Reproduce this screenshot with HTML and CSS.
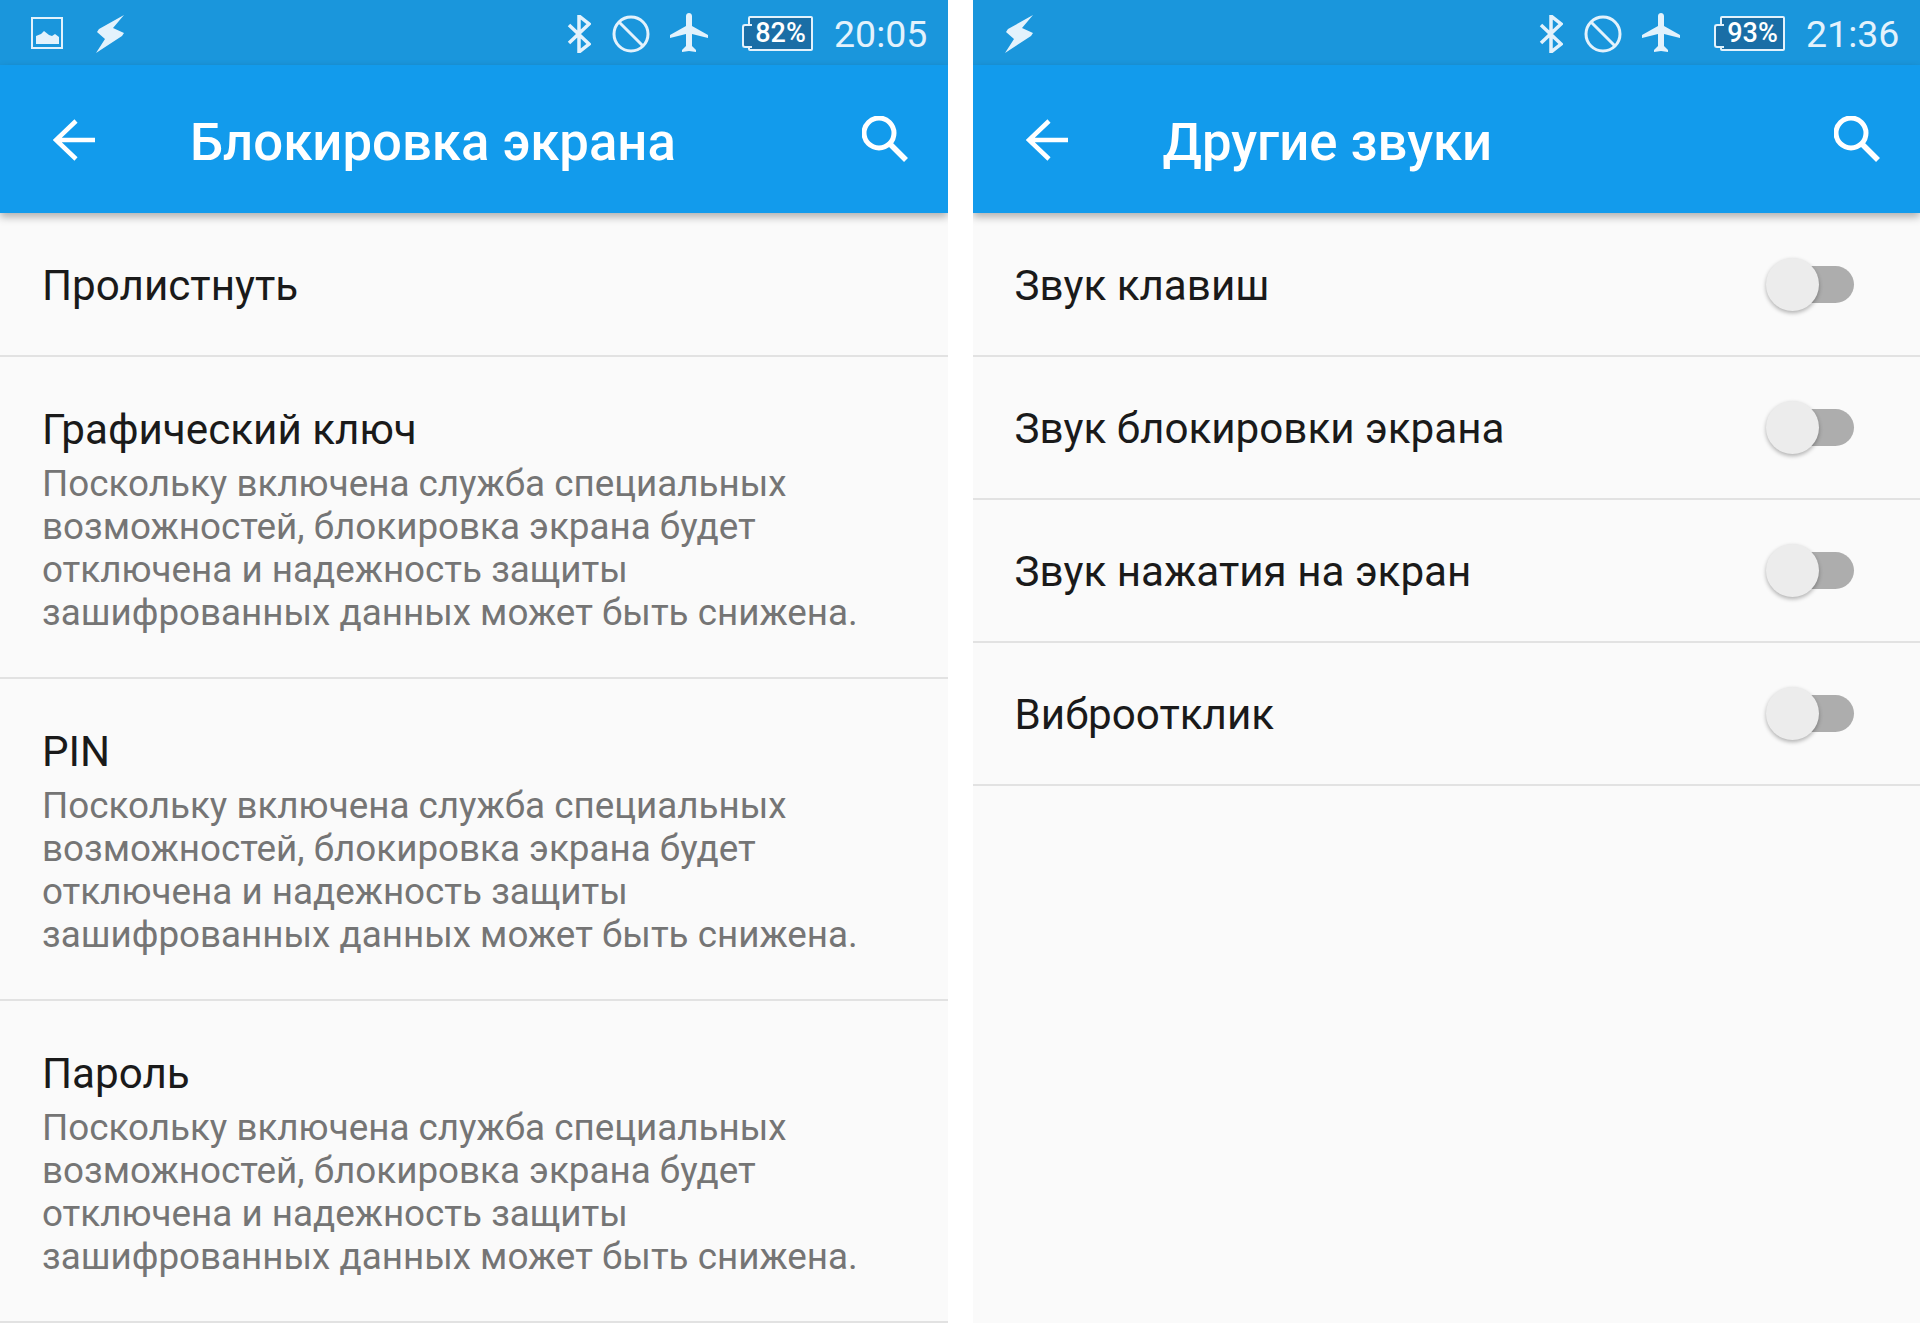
FILE: index.html

```html
<!DOCTYPE html>
<html lang="ru">
<head>
  <meta charset="UTF-8">
  <meta name="viewport" content="width=device-width, initial-scale=1.0">
  <title>Настройки</title>
  <link rel="stylesheet" href="styles.css">
</head>
<body>
<div class="screens">

  <!-- left phone -->
  <div class="phone">
    <div class="status-bar">
      <svg class="ic-image" viewBox="0 0 32 32">
        <rect x="1" y="1" width="30" height="30" fill="none" stroke="currentColor" stroke-width="2"/>
        <path d="M5 27V19l5-2 3-3 5 4 3 1 3-2 4 3v7z" fill="currentColor"/>
      </svg>
      <svg class="ic-bolt" viewBox="0 0 28 39">
        <path d="M28 0L17 13l11 5-2 3L0 38 9 24 1 17 3 14z" fill="currentColor"/>
      </svg>
      <div class="status-right">
        <svg class="ic-bt" viewBox="0 0 24 38">
          <path d="M2 10l20 19-10 8V1l10 8L2 28" fill="none" stroke="currentColor" stroke-width="3.500"/>
        </svg>
        <svg class="ic-block" viewBox="0 0 38 38">
          <circle cx="19" cy="19" r="17" fill="none" stroke="currentColor" stroke-width="3"/>
          <path d="M7 7l24 24" stroke="currentColor" stroke-width="3"/>
        </svg>
        <svg class="ic-plane" viewBox="0 0 38 40">
          <path d="M38 25v-3L22 13V3c0-2-1.500-3-3-3s-3 1-3 3v10L0 22v3l16-4v12l-4 4v2l7-1 7 1v-2l-4-4V21z" fill="currentColor"/>
        </svg>
        <div class="battery">
          <span class="battery-body">82%</span>
        </div>
        <span class="clock">20:05</span>
      </div>
    </div>
    <div class="toolbar">
      <svg class="ic-back" viewBox="0 0 42 42">
        <path d="M42 21H3M23 2L3 21l20 19" fill="none" stroke="currentColor" stroke-width="4.500"/>
      </svg>
      <div class="toolbar-title">Блокировка экрана</div>
      <svg class="ic-search" viewBox="0 0 46 46">
        <circle cx="17" cy="17" r="15" fill="none" stroke="currentColor" stroke-width="5"/>
        <path d="M27 27l17 17" stroke="currentColor" stroke-width="5.500"/>
      </svg>
    </div>
    <div class="list">
      <div class="row">
        <div class="row-title">Пролистнуть</div>
      </div>
      <div class="row tall">
        <div class="row-title">Графический ключ</div>
        <div class="row-sub">Поскольку включена служба специальных<br>возможностей, блокировка экрана будет<br>отключена и надежность защиты<br>зашифрованных данных может быть снижена.</div>
      </div>
      <div class="row tall">
        <div class="row-title">PIN</div>
        <div class="row-sub">Поскольку включена служба специальных<br>возможностей, блокировка экрана будет<br>отключена и надежность защиты<br>зашифрованных данных может быть снижена.</div>
      </div>
      <div class="row tall">
        <div class="row-title">Пароль</div>
        <div class="row-sub">Поскольку включена служба специальных<br>возможностей, блокировка экрана будет<br>отключена и надежность защиты<br>зашифрованных данных может быть снижена.</div>
      </div>
    </div>
  </div>

  <!-- right phone -->
  <div class="phone">
    <div class="status-bar">
      <svg class="ic-bolt first" viewBox="0 0 28 39">
        <path d="M28 0L17 13l11 5-2 3L0 38 9 24 1 17 3 14z" fill="currentColor"/>
      </svg>
      <div class="status-right">
        <svg class="ic-bt" viewBox="0 0 24 38">
          <path d="M2 10l20 19-10 8V1l10 8L2 28" fill="none" stroke="currentColor" stroke-width="3.500"/>
        </svg>
        <svg class="ic-block" viewBox="0 0 38 38">
          <circle cx="19" cy="19" r="17" fill="none" stroke="currentColor" stroke-width="3"/>
          <path d="M7 7l24 24" stroke="currentColor" stroke-width="3"/>
        </svg>
        <svg class="ic-plane" viewBox="0 0 38 40">
          <path d="M38 25v-3L22 13V3c0-2-1.500-3-3-3s-3 1-3 3v10L0 22v3l16-4v12l-4 4v2l7-1 7 1v-2l-4-4V21z" fill="currentColor"/>
        </svg>
        <div class="battery">
          <span class="battery-body">93%</span>
        </div>
        <span class="clock">21:36</span>
      </div>
    </div>
    <div class="toolbar">
      <svg class="ic-back" viewBox="0 0 42 42">
        <path d="M42 21H3M23 2L3 21l20 19" fill="none" stroke="currentColor" stroke-width="4.500"/>
      </svg>
      <div class="toolbar-title">Другие звуки</div>
      <svg class="ic-search" viewBox="0 0 46 46">
        <circle cx="17" cy="17" r="15" fill="none" stroke="currentColor" stroke-width="5"/>
        <path d="M27 27l17 17" stroke="currentColor" stroke-width="5.500"/>
      </svg>
    </div>
    <div class="list">
      <div class="row switch-row">
        <div class="row-title">Звук клавиш</div>
        <div class="switch"><span class="knob"></span></div>
      </div>
      <div class="row switch-row">
        <div class="row-title">Звук блокировки экрана</div>
        <div class="switch"><span class="knob"></span></div>
      </div>
      <div class="row switch-row">
        <div class="row-title">Звук нажатия на экран</div>
        <div class="switch"><span class="knob"></span></div>
      </div>
      <div class="row switch-row">
        <div class="row-title">Виброотклик</div>
        <div class="switch"><span class="knob"></span></div>
      </div>
    </div>
  </div>

</div>
</body>
</html>
```

FILE: styles.css

```css
* { box-sizing: border-box; }
body {
  margin: 0;
  background-color: #ffffff;
  font-family: Roboto, "Noto Sans", sans-serif;
  height: 1323px;
  overflow: hidden;
}
.screens {
  display: grid;
  grid-template-columns: 948px 947.500px;
  column-gap: 24.500px;
  height: 1323px;
}
.phone {
  background-color: #fafafa;
  overflow: hidden;
}
.status-bar {
  height: 65px;
  background-color: #1a96dc;
  color: #e3f2fc;
  display: flex;
  align-items: center;
  padding: 0 21px 0 31px;
}
.status-right {
  margin-left: auto;
  display: flex;
  align-items: center;
}
.ic-image { width: 32px; height: 32px; margin-top: 1px; }
.ic-bolt { width: 28px; height: 39px; margin-left: 33px; margin-top: 3px; }
.ic-bolt.first { margin-left: 1px; }
.ic-bt { width: 24px; height: 38px; margin-top: 2px; }
.ic-block { width: 38px; height: 38px; margin-left: 21px; margin-top: 2px; }
.ic-plane { width: 38px; height: 40px; margin-left: 20px; margin-top: 0; }
.battery {
  margin-left: 34px;
  width: 71px;
  height: 35px;
  display: flex;
  justify-content: flex-end;
  position: relative;
  margin-top: 1px;
}
.battery::before {
  content: "";
  position: absolute;
  left: 0;
  top: 8px;
  width: 8px;
  height: 20px;
  background-color: #1a6ea6;
  border: 2px solid #e3f2fc;
  border-right: none;
  border-radius: 3px 0 0 3px;
}
.battery-body {
  width: 65px;
  height: 35px;
  background-color: #1a6ea6;
  border: 2px solid #e3f2fc;
  border-radius: 2px;
  color: #ffffff;
  font-size: 27px;
  font-weight: 500;
  line-height: 30px;
  text-align: center;
}
.clock {
  margin-left: 21px;
  font-size: 37.500px;
  line-height: 40px;
  width: 93px;
  margin-top: 3px;
  white-space: nowrap;
}
.toolbar {
  height: 148px;
  background-color: #129bec;
  color: #ffffff;
  display: flex;
  align-items: center;
  padding: 0 40px 0 53px;
  box-shadow: 0 4px 8px rgba(0, 0, 0, 0.3);
  position: relative;
}
.ic-back { width: 42px; height: 42px; margin-top: 1px; }
.toolbar-title {
  margin-left: 95px;
  font-size: 52.700px;
  font-weight: 500;
  line-height: 60px;
  flex: 1;
  white-space: nowrap;
  padding-top: 5px;
}
.ic-search { width: 46px; height: 46px; }
.list { padding-top: 1px; }
.row {
  border-bottom: 2px solid #e2e2e2;
  padding: 0 42px;
  height: 143px;
  display: flex;
  flex-direction: column;
  justify-content: center;
}
.row.tall {
  height: 322px;
  display: block;
  padding-top: 44px;
}
.row-title {
  font-size: 42.200px;
  line-height: 57px;
  color: #1a1a1a;
  padding-top: 1px;
}
.tall .row-title { padding-top: 0; }
.row-sub {
  font-size: 36.800px;
  line-height: 43px;
  color: #757575;
  margin-top: 4px;
  white-space: nowrap;
}
.switch-row {
  flex-direction: row;
  justify-content: space-between;
  align-items: center;
  padding-right: 66px;
}
.switch {
  width: 73px;
  height: 37px;
  border-radius: 19px;
  background-color: #adadad;
  position: relative;
}
.knob {
  position: absolute;
  left: -15px;
  top: -8px;
  width: 53px;
  height: 53px;
  border-radius: 50%;
  background-color: #ececec;
  box-shadow: 0 2px 4px rgba(0, 0, 0, 0.3);
}
```
